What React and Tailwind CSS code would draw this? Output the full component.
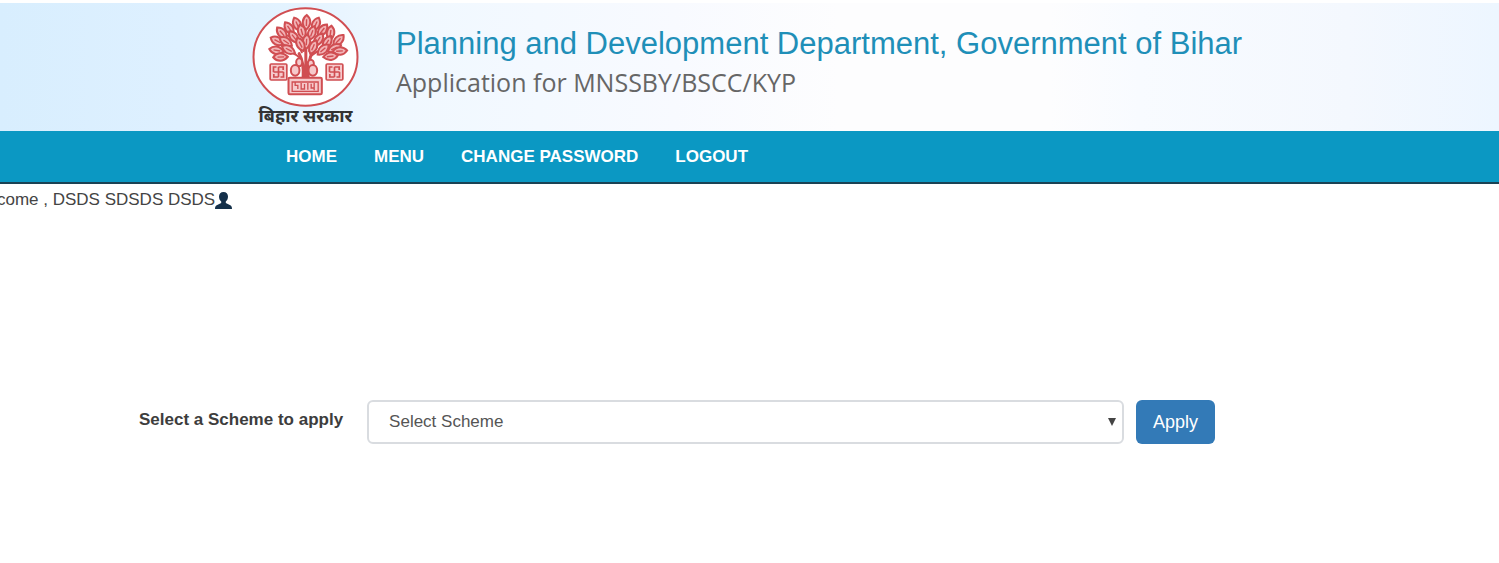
import { useState } from 'react';

const navItems = ['HOME', 'MENU', 'CHANGE PASSWORD', 'LOGOUT'];

// [x, y, rotation]
const leaves = [
  [200, 60, 2],
  [172, 66, -24],
  [228, 66, 24],
  [148, 78, -34],
  [248, 84, 38],
  [186, 88, -16],
  [216, 92, 20],
  [126, 92, -40],
  [162, 104, -38],
  [112, 116, -62],
  [138, 118, -56],
  [200, 118, 4],
  [182, 126, -26],
  [236, 112, 34],
  [110, 144, -80],
  [146, 142, -62],
  [122, 164, -92],
  [220, 134, 24],
  [272, 92, 8],
  [262, 120, 32],
  [296, 114, 44],
  [284, 138, 64],
  [250, 142, 48],
  [300, 146, 86],
  [272, 162, 84],
];

function Swastika({ x, y }) {
  return (
    <g transform={`translate(${x} ${y})`}>
      <rect width="50" height="48" rx="3" fill="#f6c9cb" strokeWidth="5" />
      <path d="M25 9v30M10 24h30M25 9h14v9M40 24v15h-9M25 39H11v-9M10 24V9h9" strokeWidth="5" />
    </g>
  );
}

function BiharEmblem() {
  return (
    <svg viewBox="37 22 320 300" className="h-[100px] w-[107px]" fill="none" stroke="#d04e52" role="img" aria-label="Government of Bihar emblem">
      <ellipse cx="197" cy="172" rx="156" ry="146" fill="#fff" strokeWidth="6" />
      <g strokeWidth="6" strokeLinecap="round">
        <path d="M190 232c2-30-2-52-12-70M205 232c-2-34 2-56 14-76M198 232V120" strokeWidth="9" />
        <path d="M182 176C168 162 146 152 118 150M186 158c-8-24-22-38-42-50M212 170c18-16 40-26 70-28M208 154c8-26 22-40 38-52M196 130V80" />
      </g>
      {leaves.map(([x, y, angle]) => (
        <g key={`${x}-${y}`} transform={`translate(${x} ${y + 8}) rotate(${angle})`}>
          <path d="M0-22C14-11 16 7 0 22C-16 7-14-11 0-22Z" fill="#f2b3b6" strokeWidth="6" />
          <path d="M0-9v20" strokeWidth="4" />
        </g>
      ))}
      <g fill="#f6c9cb" strokeWidth="6">
        <ellipse cx="178" cy="188" rx="9" ry="12" />
        <ellipse cx="213" cy="192" rx="9" ry="12" />
        <ellipse cx="166" cy="212" rx="13" ry="16" />
        <ellipse cx="219" cy="212" rx="13" ry="16" />
      </g>
      <Swastika x={91} y={193} />
      <Swastika x={259} y={193} />
      <rect x="146" y="234" width="100" height="50" rx="4" fill="#f6c9cb" strokeWidth="6" />
      <path d="M157 247h78v28h-78zM166 247v10h8v11M184 250v18h10v-15M204 250v20M214 252v13h9v-15v22" strokeWidth="4" />
    </svg>
  );
}

function UserIcon() {
  return (
    <svg viewBox="0 0 17 17" className="h-[17px] w-[17px]" fill="#14304a" aria-hidden="true">
      <path d="M8.500 0C11.300 0 13 1.800 13 4.500C13 6.800 12.200 8.500 10.800 9.500V11L15.300 13.300C16.300 13.900 17 14.800 17 17H0C0 14.800.7 13.900 1.700 13.300L6.200 11V9.500C4.800 8.500 4 6.800 4 4.500C4 1.800 5.700 0 8.500 0Z" />
    </svg>
  );
}

export default function App() {
  const [scheme, setScheme] = useState('');

  const handleSubmit = (e) => {
    e.preventDefault();
  };

  return (
    <div className="min-h-screen overflow-x-hidden bg-white pt-[3px] font-['Liberation_Sans',Arial,sans-serif] text-[17px] text-[#444]">
      {/* Header */}
      <header className="flex h-32 bg-[linear-gradient(to_right,#d8eefe_0%,#def0ff_12%,#e4f3ff_20%,#f0f8ff_27%,#f8faff_45%,#fdfdfe_56%,#fdfdfe_70%,#f8fbff_76%,#f4f8fe_90%,#edf6ff_100%)] pl-[252px]">
        <div className="flex w-[107px] flex-col items-center pt-1">
          <BiharEmblem />
          <span className="font-['Noto_Sans','Noto_Sans_Devanagari',serif] text-lg leading-4 font-bold whitespace-nowrap text-[#333]">
            बिहार सरकार
          </span>
        </div>
        <div className="ml-[37px] pt-[21px] whitespace-nowrap">
          <h1 className="text-[31px] leading-10 text-[#1f8fb8]">
            Planning and Development Department, Government of Bihar
          </h1>
          <p className="font-['Trebuchet_MS','Open_Sans',sans-serif] text-[25px] leading-9 font-medium text-[#666]">
            Application for MNSSBY/BSCC/KYP
          </p>
        </div>
      </header>

      {/* Menu */}
      <nav className="border-b-2 border-[#1b4254] bg-[#0b98c3] pl-[286px]">
        <ul className="flex h-[51px] items-center gap-[37px]">
          {navItems.map((item) => (
            <li key={item}>
              <a href="#" className="font-bold whitespace-nowrap text-white">
                {item}
              </a>
            </li>
          ))}
        </ul>
      </nav>

      <main>
        <div className="-ml-8 flex h-8 items-center whitespace-nowrap">
          <span>Welcome , DSDS SDSDS DSDS</span>
          <UserIcon />
        </div>

        <form onSubmit={handleSubmit} className="mt-[184px] flex items-center pr-[284px] pl-[139px]">
          <label htmlFor="scheme" className="mr-6 pb-1 font-bold whitespace-nowrap text-[#3d3d3d]">
            Select a Scheme to apply
          </label>
          <div className="relative min-w-0 flex-1">
            <select
              id="scheme"
              value={scheme}
              onChange={(e) => setScheme(e.target.value)}
              className="h-11 w-full appearance-none rounded-md border-2 border-[#d9dce0] bg-white px-5 text-[#555]"
            >
              <option value="">Select Scheme</option>
              <option value="mnssby">MNSSBY</option>
              <option value="bscc">BSCC</option>
              <option value="kyp">KYP</option>
            </select>
            <svg viewBox="0 0 8 8" className="pointer-events-none absolute top-1/2 right-2 h-2 w-2 -translate-y-1/2" fill="#444" aria-hidden="true">
              <path d="M0 0h8L4 8z" />
            </svg>
          </div>
          <button type="submit" className="ml-3 h-11 rounded-md bg-[#337ab7] px-[17px] text-lg text-white">
            Apply
          </button>
        </form>
      </main>
    </div>
  );
}
